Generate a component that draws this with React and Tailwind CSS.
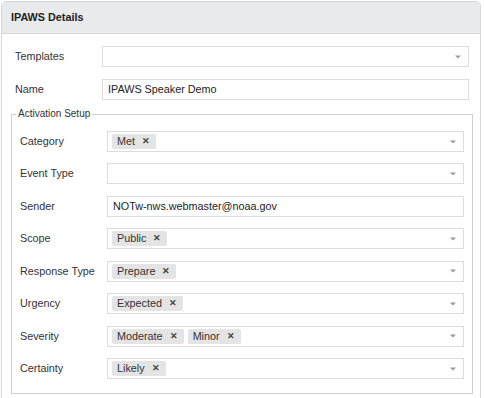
const fieldRows = [
  { label: "Category", type: "select", tags: ["Met"] },
  { label: "Event Type", type: "select", tags: [] },
  { label: "Sender", type: "input", value: "NOTw-nws.webmaster@noaa.gov" },
  { label: "Scope", type: "select", tags: ["Public"] },
  { label: "Response Type", type: "select", tags: ["Prepare"] },
  { label: "Urgency", type: "select", tags: ["Expected"] },
  { label: "Severity", type: "select", tags: ["Moderate", "Minor"] },
  { label: "Certainty", type: "select", tags: ["Likely"] },
];

const Arrow = () => (
  <span className="absolute right-[7px] top-1/2 -translate-y-1/2 w-0 h-0 border-l-[3px] border-r-[3px] border-t-[3px] border-l-transparent border-r-transparent border-t-[#999]" />
);

const Tag = ({ text }) => (
  <span className="flex items-center h-[15px] pl-[5px] pr-[6px] rounded-[2px] bg-[#e4e4e4] text-[#333]">
    {text}
    <span className="ml-[7px] text-[9px] font-bold leading-none text-[#444]">✕</span>
  </span>
);

const SelectBox = ({ tags = [] }) => (
  <div className="relative flex-1 h-[21px] border border-[#dcdcdc] bg-white flex items-center gap-[4px] pl-[4px]">
    {tags.map((t) => (
      <Tag key={t} text={t} />
    ))}
    <Arrow />
  </div>
);

const InputBox = ({ value }) => (
  <div className="flex-1 h-[21px] border border-[#dcdcdc] bg-white flex items-center pl-[5px] text-[#222]">
    {value}
  </div>
);

const Row = ({ label, children }) => (
  <div className="flex items-center">
    <div className="w-[87px] shrink-0 text-[#333]">{label}</div>
    {children}
  </div>
);

export default function App() {
  return (
    <div
      className="w-[484px] h-[398px] overflow-hidden bg-white pl-[1px] pt-[1px] text-[10.8px] leading-[13px]"
      style={{ fontFamily: '"Liberation Sans", Arial, sans-serif' }}
    >
      <div className="w-[480px] h-[420px] border border-[#d6d6d6] rounded-t-[5px]">
        <div className="h-[32px] bg-[#e9eaec] border-b border-[#d6d6d6] rounded-t-[4px] flex items-center pl-[9px] font-bold text-[#222]">
          IPAWS Details
        </div>
        <div className="pl-[9px] pr-[7px] pt-[12px]">
          <div className="flex flex-col gap-[12px] px-[4px]">
            <Row label="Templates">
              <SelectBox />
            </Row>
            <Row label="Name">
              <InputBox value="IPAWS Speaker Demo" />
            </Row>
          </div>
          <fieldset className="mt-[8px] border border-[#cfcfcf] px-[4px] pb-[14px]">
            <legend className="px-[2px] text-[10px] leading-[12px] text-[#333]">
              Activation Setup
            </legend>
            <div className="flex flex-col gap-[11.45px] px-[4px] pt-[11px]">
              {fieldRows.map((r) => (
                <Row key={r.label} label={r.label}>
                  {r.type === "select" ? (
                    <SelectBox tags={r.tags} />
                  ) : (
                    <InputBox value={r.value} />
                  )}
                </Row>
              ))}
            </div>
          </fieldset>
        </div>
      </div>
    </div>
  );
}
